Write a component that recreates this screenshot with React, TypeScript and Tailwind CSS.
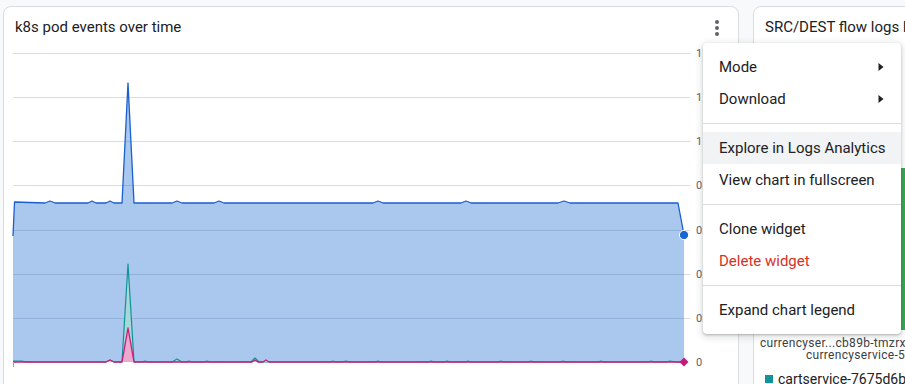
import React from "react";

const blueTop =
  "M13,236 L14.5,202 L45,203 L50,201 L55,203 L88,203 L92,201 L96,203 L106,203 L110,201 L114,203 L122,203 L128,83 L134,203 L172,203 L177,201 L182,203 L214,203 L219,201 L224,203 L373,203 L378,201 L383,203 L461,203 L466,201 L471,203 L558,203 L564,201 L570,203 L678,203 L684,235";

const tealTop =
  "M13,361 L22,361 L26,362 L106,362 L110,360 L114,362 L122,362 L128,264 L134,362 L142,362 L145,361 L148,362 L172,362 L177,359 L182,362 L186,362 L189,361 L192,362 L204,362 L207,361 L210,362 L251,362 L255,358 L259,362 L330,362 L333,361 L336,362 L342,362 L346,361 L350,362 L375,362 L378,361 L381,362 L428,362 L431,361 L434,362 L444,362 L447,361 L450,362 L465,362 L468,361 L471,362 L498,362 L501,361 L504,362 L528,362 L531,361 L534,362 L560,362 L563,361 L566,362 L598,362 L601,361 L604,362 L648,362 L651,361 L654,362 L666,362 L670,361 L676,362 L684,362";

const pinkTop =
  "M13,362 L106,362 L110,360 L114,362 L122,362 L128,328 L134,362 L252,362 L255,360 L258,362 L263,362 L266,360 L269,362 L684,362";

function Chart() {
  const grid = [53, 97, 141, 185, 230, 274, 318];
  const labels = ["1.4", "1.2", "1", "0.8", "0.6", "0.4", "0.2", "0"];
  const ys = [53, 97, 141, 185, 230, 274, 318, 362];
  return (
    <svg width="734" height="352" className="block">
      <g transform="translate(-4 -48)">
        {grid.map((y) => (
          <line key={y} x1="13" x2="690" y1={y + 0.5} y2={y + 0.5} stroke="#dadce0" strokeWidth="1" />
        ))}
        <path d={blueTop + " L684,362 L13,362 Z"} fill="#1967d2" fillOpacity="0.37" />
        <path d={blueTop} fill="none" stroke="#1a5fd0" strokeWidth="1.3" strokeLinejoin="round" />
        <path d={tealTop + " L684,362 L13,362 Z"} fill="#a6d7d9" />
        <path d={tealTop} fill="none" stroke="#12939a" strokeWidth="1.2" strokeLinejoin="round" />
        <path d={pinkTop + " L684,362 L13,362 Z"} fill="#eda9cd" />
        <path d={pinkTop} fill="none" stroke="#c81a7a" strokeWidth="1.3" strokeLinejoin="round" />
        <line x1="13.5" x2="13.5" y1="362" y2="367" stroke="#9aa0a6" strokeWidth="1" />
        <circle cx="684" cy="235" r="4.6" fill="#1967d2" stroke="#ffffff" strokeWidth="1" />
        <path d="M684,357.5 L688.5,362 L684,366.5 L679.5,362 Z" fill="#c81a7a" />
        {labels.map((t, i) => (
          <text key={i} x="696" y={ys[i] + 4} fontSize="11" fill="#5f6368" fontFamily="Roboto, sans-serif">
            {t}
          </text>
        ))}
      </g>
    </svg>
  );
}

function LeftCard() {
  return (
    <div className="flex h-[400px] w-[736px] shrink-0 flex-col rounded-[8px] border border-[#dadce0] bg-white">
      <div className="flex h-[41px] items-center justify-between pl-[11px] pr-[9px]">
        <span className="text-[15px] text-[#202124]">k8s pod events over time</span>
        <svg width="24" height="24" viewBox="0 0 24 24">
          <circle cx="12" cy="6" r="2" fill="#5f6368" />
          <circle cx="12" cy="12" r="2" fill="#5f6368" />
          <circle cx="12" cy="18" r="2" fill="#5f6368" />
        </svg>
      </div>
      <Chart />
    </div>
  );
}

function RightCard() {
  return (
    <div className="flex h-[400px] w-[320px] shrink-0 flex-col rounded-[8px] border border-[#dadce0] bg-white">
      <div className="flex h-[41px] items-center pl-[11px]">
        <span className="whitespace-nowrap text-[15px] text-[#202124]">SRC/DEST flow logs by pod</span>
      </div>
      <div className="h-[289px] pl-[147px] pt-[120px]">
        <div className="h-[162px] w-[30px] bg-[#34a853]" />
      </div>
      <div className="flex h-[12px] items-center pl-[6px] text-[12px] leading-[12px] text-[#3c4043]">
        <span className="whitespace-nowrap tracking-[0.3px]">currencyser...cb89b-tmzrx</span>
        <span className="ml-[7px] inline-block h-[12px] w-px shrink-0 bg-[#3c4043]" />
      </div>
      <div className="h-[12px] whitespace-nowrap pl-[52px] text-[12px] leading-[12px] tracking-[0.3px] text-[#3c4043]">
        currencyservice-5dfbf6
      </div>
      <div className="mt-[8px] flex h-[20px] items-center gap-[5px] pl-[11px] text-[14px] leading-[20px] text-[#202124]">
        <div className="h-[8px] w-[8px] shrink-0 bg-[#12939a]" />
        <span className="whitespace-nowrap">cartservice-7675d6bc7c</span>
      </div>
    </div>
  );
}

function Arrow() {
  return (
    <svg width="6" height="10" viewBox="0 0 6 10">
      <path d="M0.5,1 L5.5,5 L0.5,9 Z" fill="#202124" />
    </svg>
  );
}

function Item({ label, red, active, arrow }: { label: string; red?: boolean; active?: boolean; arrow?: boolean }) {
  return (
    <div
      className={
        "flex h-[32px] items-center justify-between pl-[16px] pr-[17px] text-[15px] " +
        (active ? "bg-[#f1f3f4] " : "") +
        (red ? "text-[#d93025]" : "text-[#202124]")
      }
    >
      <span className="whitespace-nowrap">{label}</span>
      {arrow ? <Arrow /> : null}
    </div>
  );
}

function Menu() {
  return (
    <div className="absolute left-[703px] top-[43px] w-[198px] rounded-[4px] bg-white shadow-[0_1px_2px_rgba(60,64,67,0.3),0_2px_6px_2px_rgba(60,64,67,0.15)]">
      <div className="py-[8px]">
        <Item label="Mode" arrow />
        <Item label="Download" arrow />
      </div>
      <div className="border-t border-[#dadce0] py-[8px]">
        <Item label="Explore in Logs Analytics" active />
        <Item label="View chart in fullscreen" />
      </div>
      <div className="border-t border-[#dadce0] py-[8px]">
        <Item label="Clone widget" />
        <Item label="Delete widget" red />
      </div>
      <div className="border-t border-[#dadce0] py-[8px]">
        <Item label="Expand chart legend" />
      </div>
    </div>
  );
}

export default function App() {
  return (
    <div className="relative h-[384px] w-[905px] overflow-hidden bg-[#f8f9fa] font-['Roboto',sans-serif]">
      <div className="flex gap-[14px] pl-[3px] pt-[6px]">
        <LeftCard />
        <RightCard />
      </div>
      <Menu />
    </div>
  );
}
